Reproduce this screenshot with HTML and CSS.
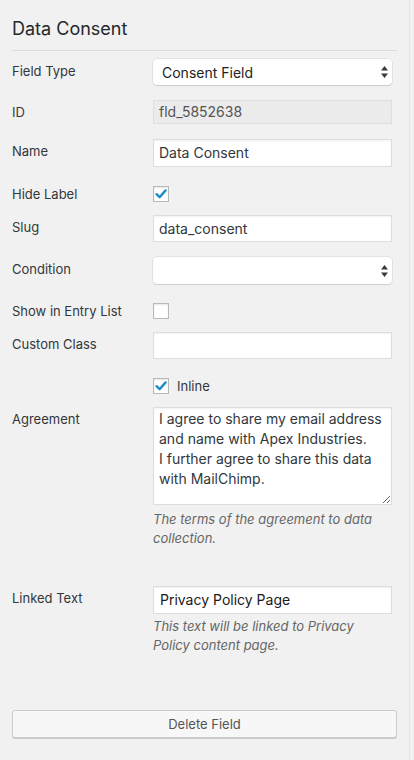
FILE: index.html
```html
<!DOCTYPE html>
<html lang="en">
<head>
<meta charset="utf-8">
<title>Data Consent</title>
<link rel="stylesheet" href="styles.css">
</head>
<body>
<div class="panel">
  <h2 class="title">Data Consent</h2>

  <div class="row first">
    <label class="lbl">Field Type</label>
    <div class="select">
      <span>Consent Field</span>
      <svg class="arrows" width="7" height="12" viewBox="0 0 7 12"><path d="M3.5 0 L7 4.6 L0 4.6 Z M3.5 12 L7 7.4 L0 7.4 Z" fill="#3a3a3a"/></svg>
    </div>
  </div>

  <div class="row">
    <label class="lbl">ID</label>
    <div class="input disabled h24">fld_5852638</div>
  </div>

  <div class="row">
    <label class="lbl">Name</label>
    <div class="input">Data Consent</div>
  </div>

  <div class="row check">
    <label class="lbl">Hide Label</label>
    <div class="cb-wrap">
      <span class="cb checked"><svg width="14" height="14" viewBox="0 0 14 14"><path d="M2.6 7.2 L5.6 10.2 L11.6 3.4" fill="none" stroke="#1e8cbe" stroke-width="2.4" stroke-linecap="round" stroke-linejoin="round"/></svg></span>
    </div>
  </div>

  <div class="row">
    <label class="lbl">Slug</label>
    <div class="input h27">data_consent</div>
  </div>

  <div class="row">
    <label class="lbl">Condition</label>
    <div class="select h27">
      <span></span>
      <svg class="arrows" width="7" height="12" viewBox="0 0 7 12"><path d="M3.5 0 L7 4.6 L0 4.6 Z M3.5 12 L7 7.4 L0 7.4 Z" fill="#3a3a3a"/></svg>
    </div>
  </div>

  <div class="row check">
    <label class="lbl">Show in Entry List</label>
    <div class="cb-wrap">
      <span class="cb"></span>
    </div>
  </div>

  <div class="row">
    <label class="lbl">Custom Class</label>
    <div class="input h27"></div>
  </div>

  <div class="row check">
    <span class="lbl"></span>
    <div class="cb-wrap">
      <span class="cb checked"><svg width="14" height="14" viewBox="0 0 14 14"><path d="M2.6 7.2 L5.6 10.2 L11.6 3.4" fill="none" stroke="#1e8cbe" stroke-width="2.4" stroke-linecap="round" stroke-linejoin="round"/></svg></span>
      <span class="cb-text">Inline</span>
    </div>
  </div>

  <div class="row">
    <label class="lbl">Agreement</label>
    <div class="field">
      <textarea class="textarea" wrap="off">I agree to share my email address
and name with Apex Industries.
I further agree to share this data
with MailChimp.</textarea>
      <p class="desc">The terms of the agreement to data collection.</p>
    </div>
  </div>

  <div class="row linked">
    <label class="lbl">Linked Text</label>
    <div class="field">
      <div class="input dark">Privacy Policy Page</div>
      <p class="desc tight">This text will be linked to Privacy Policy content page.</p>
    </div>
  </div>

  <button class="btn" type="button">Delete Field</button>
</div>
</body>
</html>
```

FILE: styles.css
```css
html, body {
  margin: 0;
  padding: 0;
  background: #f1f1f1;
}

body {
  font-family: Inter, "Liberation Sans", sans-serif;
  color: #32373c;
  width: 414px;
  height: 760px;
  overflow: hidden;
}

.panel {
  width: 385px;
  height: 760px;
  padding: 0 12px;
  border-right: 1px solid #e4e4e4;
  box-sizing: content-box;
  background: #f1f1f1;
}

.title {
  margin: 0;
  padding: 18px 0 10px;
  font-size: 18px;
  line-height: 22px;
  font-weight: 400;
  color: #23282d;
  border-bottom: 1px solid #dcdcdc;
}

.row {
  display: grid;
  grid-template-columns: 141px 239px;
  align-items: start;
  margin-top: 15px;
}

.row.first {
  margin-top: 8px;
}

.row.check {
  margin-top: 19px;
  align-items: center;
}

.row.check + .row {
  margin-top: 13px;
}

.row.linked {
  margin-top: 38px;
}

.lbl {
  font-size: 13px;
  line-height: 16px;
  padding-top: 4px;
  color: #32373c;
}

.row.check .lbl {
  padding-top: 0;
}

.input {
  box-sizing: border-box;
  height: 28px;
  background: #fff;
  border: 1px solid #dddddd;
  box-shadow: inset 0 1px 2px rgba(0, 0, 0, 0.06);
  font-size: 14px;
  line-height: 26px;
  padding: 0 5px;
  color: #32373c;
  white-space: nowrap;
}

.input.h24 { height: 24px; line-height: 22px; }
.input.h27 { height: 27px; line-height: 25px; }

.input.disabled {
  background: #ebebeb;
  border-color: #dedede;
  box-shadow: none;
  color: #555;
}

.input.dark {
  color: #1a1a1a;
  padding-left: 6px;
}

.select {
  box-sizing: border-box;
  height: 26px;
  background: #fff;
  border-radius: 4px;
  box-shadow: 0 0 0 0.5px rgba(0, 0, 0, 0.12), 0 1px 1px rgba(0, 0, 0, 0.1);
  display: flex;
  align-items: center;
  justify-content: space-between;
  padding: 0 4px 0 9px;
  font-size: 14px;
  color: #222;
}

.select.h27 { height: 27px; }

.arrows {
  display: block;
}

.cb-wrap {
  display: flex;
  align-items: center;
  gap: 8px;
  height: 16px;
}

.cb {
  box-sizing: border-box;
  width: 16px;
  height: 16px;
  background: #fff;
  border: 1px solid #b4b9be;
  box-shadow: inset 0 1px 2px rgba(0, 0, 0, 0.1);
  display: flex;
  align-items: center;
  justify-content: center;
}

.cb svg {
  display: block;
}

.cb-text {
  font-size: 13px;
  line-height: 16px;
  color: #32373c;
}

.field {
  display: flex;
  flex-direction: column;
}

.textarea {
  box-sizing: border-box;
  width: 239px;
  height: 98px;
  margin: 0;
  background: #fff;
  border: 1px solid #dddddd;
  box-shadow: inset 0 1px 2px rgba(0, 0, 0, 0.06);
  font-family: Inter, "Liberation Sans", sans-serif;
  font-size: 14px;
  line-height: 20px;
  padding: 1px 5px;
  color: #32373c;
  overflow: hidden;
  resize: vertical;
  display: block;
}

.desc {
  margin: 5px 0 0;
  font-size: 13px;
  line-height: 19px;
  font-style: italic;
  color: #666;
}

.desc.tight {
  margin-top: 3px;
}

.btn {
  display: block;
  width: 385px;
  height: 28px;
  margin-top: 55px;
  background: #f7f7f7;
  border: 1px solid #cccccc;
  border-radius: 3px;
  box-shadow: 0 1px 0 #cccccc;
  font-family: Inter, "Liberation Sans", sans-serif;
  font-size: 13px;
  color: #555;
  padding: 0;
}
```
